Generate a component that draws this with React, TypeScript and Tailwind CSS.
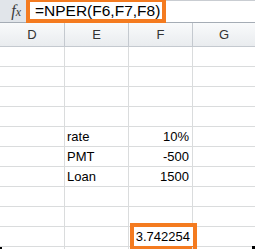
import React from "react";

const font = { fontFamily: '"Liberation Sans", Arial, sans-serif' };

type Row = { e?: string; f?: string; hl?: boolean };

const rows: Row[] = [
  {}, {}, {}, {},
  { e: "rate", f: "10%" },
  { e: "PMT", f: "-500" },
  { e: "Loan", f: "1500" },
  {}, {},
  { f: "3.742254", hl: true },
  {},
];

export default function App() {
  return (
    <div className="w-[255px] h-[249px] overflow-hidden bg-white relative" style={font}>
      {/* formula bar */}
      <div className="flex h-[23px] border-b border-[#a5acb5] bg-white">
        <div className="w-[26px] bg-[#e1e5ea] flex items-center justify-end pr-[5px]">
          <span className="text-[16px] italic text-[#3a3a3a] leading-none" style={{ fontFamily: '"Liberation Serif", serif' }}>
            f<span className="text-[12px]">x</span>
          </span>
        </div>
        <div className="w-[140px] h-[23px] border-x-[4px] border-b-[4px] border-t-[2px] border-[#f47b20] bg-white flex items-center pl-[5px] text-[15.5px] text-black leading-none">
          =NPER(F6,F7,F8)
        </div>
        <div className="flex-1 border-t border-[#c9cdd2]" />
      </div>
      {/* header */}
      <div className="flex h-[24px] border-b border-[#c4c9cf] bg-gradient-to-b from-[#f9fafb] to-[#e9ecef] text-[13px] text-[#333]">
        <div className="w-[65px] border-r border-[#c4c9cf] flex items-center justify-center">D</div>
        <div className="w-[64px] border-r border-[#c4c9cf] flex items-center justify-center">E</div>
        <div className="w-[64px] border-r border-[#c4c9cf] flex items-center justify-center">F</div>
        <div className="flex-1 flex items-center justify-center">G</div>
      </div>
      {/* grid */}
      {rows.map((r, i) => (
        <div key={i} className="flex h-[20px] border-b border-[#dadcdd] text-[13px] text-black">
          <div className="w-[65px] border-r border-[#dadcdd]" />
          <div className="w-[64px] border-r border-[#dadcdd] flex items-center pl-[2px]">{r.e}</div>
          <div className="w-[64px] border-r border-[#dadcdd] flex items-center justify-end pr-[3px] relative">
            {r.hl ? (
              <div className="absolute left-[1px] top-[-4px] w-[67px] h-[27px] border-[4px] border-[#f47b20] bg-white flex items-center justify-end pr-[3px]">
                {r.f}
              </div>
            ) : (
              r.f
            )}
          </div>
          <div className="flex-1" />
        </div>
      ))}
      <div className="absolute left-0 top-[247px] w-[2px] h-[2px] bg-black" />
      <div className="absolute left-[252px] top-[246px] w-[3px] h-[3px] bg-black" />
    </div>
  );
}
